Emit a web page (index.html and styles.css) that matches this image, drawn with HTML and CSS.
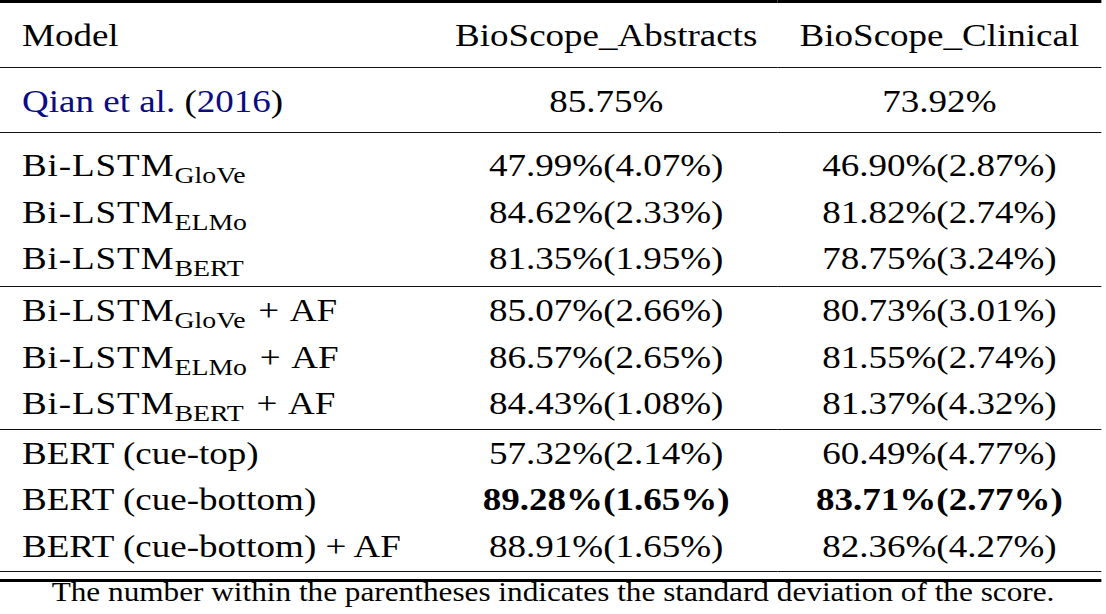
FILE: index.html
```html
<!DOCTYPE html>
<html lang="en">
<head>
<meta charset="utf-8">
<title>BioScope results</title>
<link rel="stylesheet" href="styles.css">
</head>
<body>
<div class="page">
  <table class="results">
    <colgroup>
      <col class="c-model">
      <col class="c-abs">
      <col class="c-cli">
    </colgroup>
    <thead>
      <tr class="head">
        <th class="name">Model</th>
        <th>BioScope_Abstracts</th>
        <th>BioScope_Clinical</th>
      </tr>
    </thead>
    <tbody class="ref">
      <tr>
        <td class="name"><span class="cite">Qian et al.</span> (<span class="cite">2016</span>)</td>
        <td>85.75%</td>
        <td>73.92%</td>
      </tr>
    </tbody>
    <tbody class="group first">
      <tr>
        <td class="name"><span class="base">Bi-LSTM</span><sub class="idx">GloVe</sub></td>
        <td>47.99%(4.07%)</td>
        <td>46.90%(2.87%)</td>
      </tr>
      <tr>
        <td class="name"><span class="base">Bi-LSTM</span><sub class="idx">ELMo</sub></td>
        <td>84.62%(2.33%)</td>
        <td>81.82%(2.74%)</td>
      </tr>
      <tr>
        <td class="name"><span class="base">Bi-LSTM</span><sub class="idx">BERT</sub></td>
        <td>81.35%(1.95%)</td>
        <td>78.75%(3.24%)</td>
      </tr>
    </tbody>
    <tbody class="group second">
      <tr>
        <td class="name"><span class="base">Bi-LSTM</span><sub class="idx">GloVe</sub> <span class="af">+ AF</span></td>
        <td>85.07%(2.66%)</td>
        <td>80.73%(3.01%)</td>
      </tr>
      <tr>
        <td class="name"><span class="base">Bi-LSTM</span><sub class="idx">ELMo</sub> <span class="af">+ AF</span></td>
        <td>86.57%(2.65%)</td>
        <td>81.55%(2.74%)</td>
      </tr>
      <tr>
        <td class="name"><span class="base">Bi-LSTM</span><sub class="idx">BERT</sub> <span class="af">+ AF</span></td>
        <td>84.43%(1.08%)</td>
        <td>81.37%(4.32%)</td>
      </tr>
    </tbody>
    <tbody class="group third">
      <tr>
        <td class="name">BERT (cue-top)</td>
        <td>57.32%(2.14%)</td>
        <td>60.49%(4.77%)</td>
      </tr>
      <tr>
        <td class="name">BERT (cue-bottom)</td>
        <td class="best">89.28%(1.65%)</td>
        <td class="best">83.71%(2.77%)</td>
      </tr>
      <tr>
        <td class="name">BERT (cue-bottom) + AF</td>
        <td>88.91%(1.65%)</td>
        <td>82.36%(4.27%)</td>
      </tr>
    </tbody>
  </table>
  <div class="bottomrule"></div>
  <p class="note">The number within the parentheses indicates the standard deviation of the score.</p>
</div>
</body>
</html>
```

FILE: styles.css
```css
html {
  overflow: hidden;
  background: #ffffff;
}

body {
  margin: 0;
  padding: 0;
  background: #ffffff;
}

.page {
  width: 956px;
  padding-bottom: 12px;
  transform: scaleX(1.1569);
  transform-origin: 0 0;
  font-family: "Liberation Serif", "Times New Roman", serif;
  color: #000;
}

.results {
  width: 952px;
  border-collapse: collapse;
  table-layout: fixed;
  font-size: 32px;
  border-top: 3px solid #000;
  border-bottom: 1px solid #111;
}

.c-model { width: 376px; }
.c-abs { width: 296px; }
.c-cli { width: 280px; }

.results th,
.results td {
  font-weight: normal;
  text-align: center;
  line-height: 46.6px;
  padding: 0 10px;
  white-space: nowrap;
  vertical-align: middle;
}

.results .name {
  text-align: left;
  padding-left: 19px;
}

.head th {
  padding-top: 9px;
  padding-bottom: 8px;
  border-bottom: 1px solid #111;
}

.ref td {
  padding-top: 10px;
  padding-bottom: 8px;
}

.group {
  border-top: 1px solid #111;
}

.group.first tr:first-child td { padding-top: 9px; }
.group.first tr:last-child td { padding-bottom: 4px; }
.group.second tr:last-child td { padding-bottom: 2px; }
.group.third tr:last-child td { padding-bottom: 1px; }

.cite {
  color: #0b0b84;
}

.base {
  letter-spacing: 0.8px;
}

.idx {
  font-size: 24px;
  line-height: 0;
  vertical-align: -7px;
  margin-left: 0;
  font-weight: normal;
}

.af {
  padding-left: 3px;
  word-spacing: 3px;
}

.results td.best {
  font-weight: bold;
}

.bottomrule {
  width: 952px;
  margin-top: 7px;
  border-top: 3px solid #000;
}

.note {
  margin: 0;
  font-size: 27px;
  line-height: 20px;
  text-align: center;
  width: 956px;
}
```
